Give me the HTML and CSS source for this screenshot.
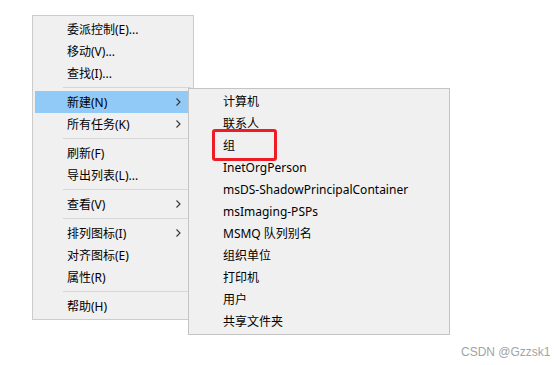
FILE: index.html
```html
<!DOCTYPE html>
<html lang="zh-CN">
<head>
    <meta charset="UTF-8">
    <title>新建菜单</title>
    <link rel="stylesheet" href="styles.css">
</head>
<body>
    <div class="stage">
        <div class="menu main-menu">
            <div class="item">委派控制(E)...</div>
            <div class="item">移动(V)...</div>
            <div class="item">查找(I)...</div>
            <div class="sep"></div>
            <div class="item active">新建(N)
                <svg class="arrow" width="5" height="8" viewBox="0 0 5 8"><path d="M0.5 0.5 L4 4 L0.5 7.5" fill="none" stroke="#333" stroke-width="1.1"/></svg>
            </div>
            <div class="item">所有任务(K)
                <svg class="arrow" width="5" height="8" viewBox="0 0 5 8"><path d="M0.5 0.5 L4 4 L0.5 7.5" fill="none" stroke="#333" stroke-width="1.1"/></svg>
            </div>
            <div class="sep"></div>
            <div class="item">刷新(F)</div>
            <div class="item">导出列表(L)...</div>
            <div class="sep"></div>
            <div class="item">查看(V)
                <svg class="arrow" width="5" height="8" viewBox="0 0 5 8"><path d="M0.5 0.5 L4 4 L0.5 7.5" fill="none" stroke="#333" stroke-width="1.1"/></svg>
            </div>
            <div class="sep"></div>
            <div class="item">排列图标(I)
                <svg class="arrow" width="5" height="8" viewBox="0 0 5 8"><path d="M0.5 0.5 L4 4 L0.5 7.5" fill="none" stroke="#333" stroke-width="1.1"/></svg>
            </div>
            <div class="item">对齐图标(E)</div>
            <div class="item">属性(R)</div>
            <div class="sep"></div>
            <div class="item">帮助(H)</div>
        </div>

        <div class="menu sub-menu">
            <div class="item">计算机</div>
            <div class="item">联系人</div>
            <div class="item marked">组<span class="mark"></span></div>
            <div class="item">InetOrgPerson</div>
            <div class="item">msDS-ShadowPrincipalContainer</div>
            <div class="item">msImaging-PSPs</div>
            <div class="item">MSMQ 队列别名</div>
            <div class="item">组织单位</div>
            <div class="item">打印机</div>
            <div class="item">用户</div>
            <div class="item">共享文件夹</div>
        </div>

        <div class="watermark">CSDN @Gzzsk1</div>
    </div>
</body>
</html>
```

FILE: styles.css
```css
* {
    margin: 0;
    padding: 0;
    box-sizing: border-box;
}

body {
    background: #fff;
    font-family: 'Noto Sans', 'Noto Sans CJK SC', sans-serif;
    font-size: 12px;
    color: #000;
}

.stage {
    position: relative;
    width: 556px;
    height: 365px;
    padding: 15px 0 0 32px;
}

.menu {
    display: flex;
    flex-direction: column;
    background: #f0f0f0;
    border: 1px solid #cccccc;
}

.main-menu {
    width: 162px;
    padding: 2px;
}

.sub-menu {
    position: absolute;
    left: 188px;
    top: 88px;
    width: 262px;
    padding: 1px 2px 2px;
    border-color: #c4c4c4;
}

.item {
    position: relative;
    display: flex;
    align-items: center;
    justify-content: space-between;
    height: 22px;
    padding: 0 10px 0 32px;
    white-space: nowrap;
}

.item.active {
    background: #91c9f7;
}

.arrow {
    display: block;
}

.sep {
    height: 1px;
    margin: 3px 0 3px 28px;
    background: #d7d7d7;
}

/* red annotation box */
.mark {
    position: absolute;
    left: 21px;
    top: -5px;
    width: 65px;
    height: 32px;
    border: 3px solid #ee1c25;
    border-radius: 3px;
}

.watermark {
    position: absolute;
    left: 461px;
    top: 345px;
    color: #a3a3a3;
    font-family: 'Liberation Sans', sans-serif;
    font-size: 12px;
}
```
